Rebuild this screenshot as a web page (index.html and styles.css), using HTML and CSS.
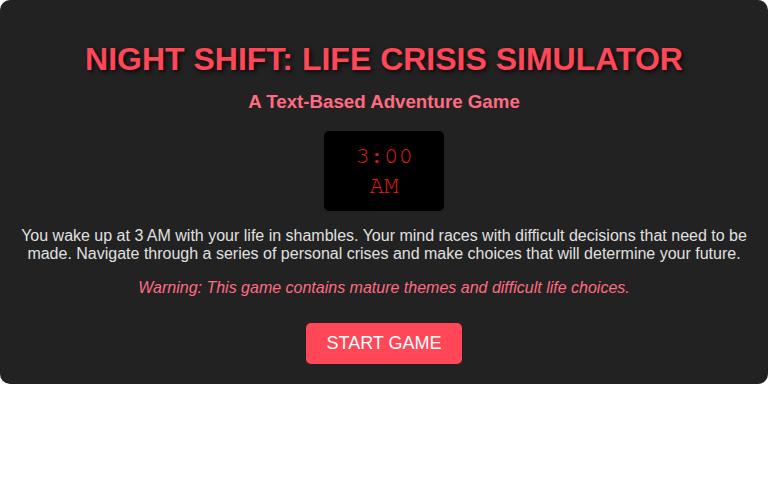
FILE: index.html
```html
<!DOCTYPE html>
<html>
    <head>
        <meta charset="UTF-8" />
        <title>Night Shift: Life Crisis Simulator</title>
        <link rel="stylesheet" href="styles.css">
    </head>

    <body>
        <div id="game">
            <div id="intro">
                <h1 class="title">NIGHT SHIFT: LIFE CRISIS SIMULATOR</h1>
                <h3 class="subtitle">A Text-Based Adventure Game</h3>
                <div class="clock">3:00 AM</div>
                <p class="story">
                    You wake up at 3 AM with your life in shambles. Your mind races with difficult decisions that need to be made. Navigate through a series of personal crises and make choices that will determine your future.
                </p>
                <p class="warning">Warning: This game contains mature themes and difficult life choices.</p>
                <button id="startButton" class="btn">START GAME</button>
            </div>
        </div>
    </body>
</html>
```

FILE: styles.css
```css
* {
    margin: 0;
    padding: 0;
    box-sizing: border-box;
}

body {
    background-color: #ffffff;
    font-family: "Liberation Sans", Arial, sans-serif;
    color: #e0e0e0;
}

#game {
    background-color: #222222;
    border-radius: 10px;
    padding: 20px;
}

#intro {
    display: flex;
    flex-direction: column;
    align-items: center;
    text-align: center;
}

.title {
    margin-top: 21px;
    font-size: 32px;
    color: #ff4757;
    text-shadow: 2px 2px 4px rgba(0, 0, 0, 0.8);
}

.subtitle {
    margin-top: 13px;
    font-size: 18.72px;
    color: #ff6b81;
}

.clock {
    margin-top: 18px;
    width: 120px;
    padding: 10px;
    background-color: #000000;
    border-radius: 5px;
    font-family: "Nimbus Mono PS", "FreeMono", Courier, monospace;
    font-size: 24px;
    line-height: 30px;
    color: #e01818;
}

.story {
    margin-top: 16px;
    font-size: 16px;
    line-height: 18px;
}

.warning {
    margin-top: 16px;
    font-style: italic;
    color: #ff6b81;
}

.btn {
    margin-top: 26px;
    padding: 10px 20px;
    border: none;
    border-radius: 5px;
    background-color: #ff4757;
    color: #ffffff;
    font-family: "Liberation Sans", Arial, sans-serif;
    font-size: 18px;
    cursor: pointer;
}
```
